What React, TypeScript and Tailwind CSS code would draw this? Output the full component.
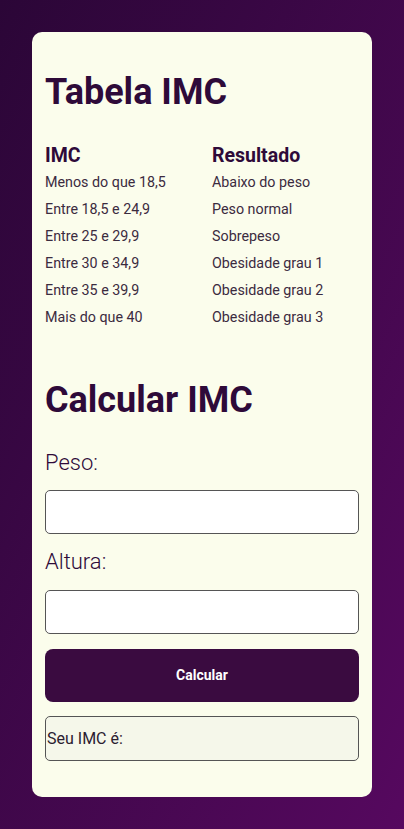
import React, { useState } from "react";

const rows = [
  ["Menos do que 18,5", "Abaixo do peso"],
  ["Entre 18,5 e 24,9", "Peso normal"],
  ["Entre 25 e 29,9", "Sobrepeso"],
  ["Entre 30 e 34,9", "Obesidade grau 1"],
  ["Entre 35 e 39,9", "Obesidade grau 2"],
  ["Mais do que 40", "Obesidade grau 3"],
];

const App: React.FC = () => {
  const [peso, setPeso] = useState("");
  const [altura, setAltura] = useState("");
  const [imc, setImc] = useState("");

  const calcular = () => {
    const p = parseFloat(peso.replace(",", "."));
    const a = parseFloat(altura.replace(",", "."));
    if (p > 0 && a > 0) setImc((p / (a * a)).toFixed(1));
  };

  return (
    <div
      className="min-h-screen w-full bg-linear-to-br from-[#2b0637] to-[#56085f] px-8 pt-8 pb-8"
      style={{ fontFamily: "Roboto, 'Noto Sans', sans-serif" }}
    >
      <div className="rounded-[10px] bg-[#fbfdec] px-[13px] pt-[38px] pb-[36px]">
        {/* Tabela */}
        <h1 className="text-[36px] leading-[44px] font-bold text-[#2e0a39]">Tabela IMC</h1>

        <div className="mt-[29px] grid grid-cols-[167px_1fr]">
          <div className="h-[26px] text-[19.5px] leading-[26px] font-bold text-[#2e0a39]">IMC</div>
          <div className="h-[26px] text-[19.5px] leading-[26px] font-bold text-[#2e0a39]">Resultado</div>
          {rows.map(([faixa, res]) => (
            <React.Fragment key={faixa}>
              <div className="h-[27px] text-[14.3px] leading-[27px] text-[#3b2b3f]">{faixa}</div>
              <div className="h-[27px] text-[14.3px] leading-[27px] text-[#3b2b3f]">{res}</div>
            </React.Fragment>
          ))}
        </div>

        {/* Calcular */}
        <h2 className="mt-[47px] text-[36px] leading-[44px] font-bold text-[#2e0a39]">Calcular IMC</h2>

        <label className="mt-[28px] block text-[22px] leading-[26px] font-light text-[#2e0a39]">Peso:</label>
        <input
          type="text"
          value={peso}
          onChange={(e) => setPeso(e.target.value)}
          className="mt-[14px] block h-[44px] w-full rounded-[5px] border border-[#555] bg-white px-2 text-[16px] focus:outline-none"
        />

        <label className="mt-[15px] block text-[22px] leading-[26px] font-light text-[#2e0a39]">Altura:</label>
        <input
          type="text"
          value={altura}
          onChange={(e) => setAltura(e.target.value)}
          className="mt-[15px] block h-[44px] w-full rounded-[5px] border border-[#555] bg-white px-2 text-[16px] focus:outline-none"
        />

        <button
          onClick={calcular}
          className="mt-[15px] flex h-[53px] w-full items-center justify-center rounded-[8px] bg-[#3a0b40] text-[14px] font-bold text-white"
        >
          Calcular
        </button>

        <div className="mt-[14px] flex h-[45px] items-center rounded-[5px] border border-[#555] bg-[#f5f7ea] px-[1px] text-[16px] text-[#2b2030]">
          Seu IMC é: {imc}
        </div>
      </div>
    </div>
  );
};

export default App;
